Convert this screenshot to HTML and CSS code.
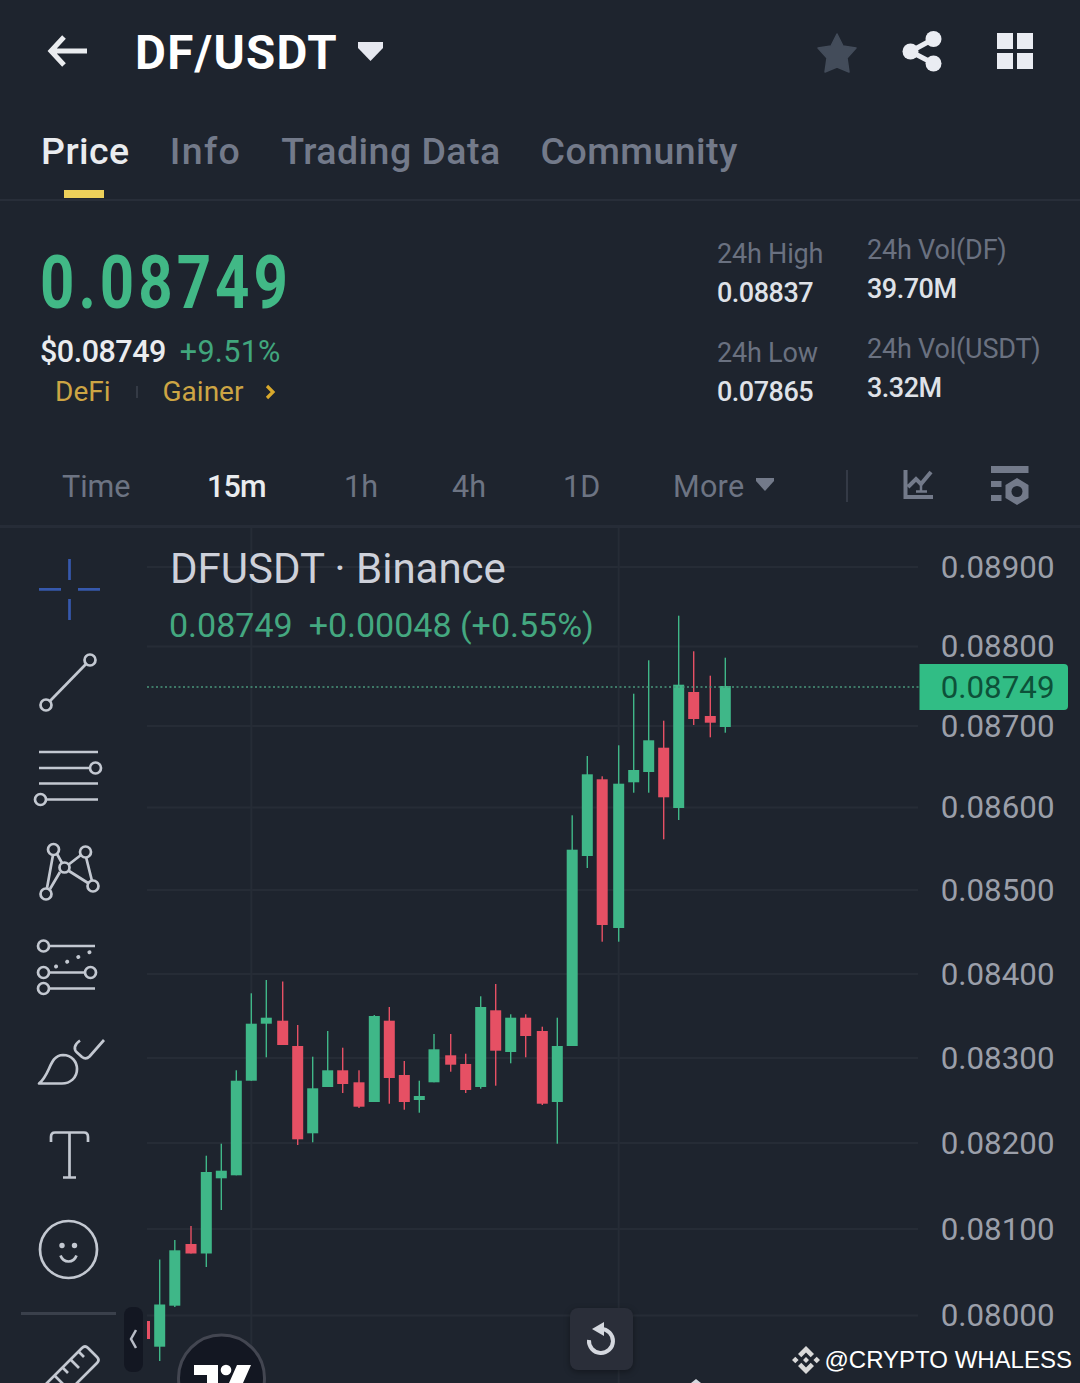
FILE: index.html
```
<!DOCTYPE html>
<html lang="en">
<head>
    <meta charset="UTF-8">
    <title>DF/USDT</title>
    <link rel="stylesheet" href="styles.css">
</head>
<body>
    <div class="header">
        <svg class="back" width="40" height="34" viewBox="0 0 40 34"><path d="M17 3L4 17l13 14M4 17h36" fill="none" stroke="#eaecef" stroke-width="5"/></svg>
        <h1 class="pair">DF/USDT</h1>
        <svg class="caret" width="25" height="19" viewBox="0 0 25 19"><path d="M0 0h25v6L12.500 19 0 6z" fill="#e6e8f0"/></svg>
        <div class="actions">
            <svg width="42" height="42" viewBox="0 0 42 42"><path d="M21 3l6 12 13 2-9 10 2 14-12-5-12 5 2-14-9-10 13-2z" fill="#434c5a" stroke="#434c5a" stroke-width="1.500" stroke-linejoin="round"/></svg>
            <svg width="42" height="42" viewBox="0 0 42 42"><path d="M32.500 9L9.500 21.500l23 12" fill="none" stroke="#eaecf2" stroke-width="5"/><g fill="#eaecf2"><circle cx="32.500" cy="9" r="8"/><circle cx="9.500" cy="21.500" r="8"/><circle cx="32.500" cy="33.500" r="8"/></g></svg>
            <svg width="42" height="42" viewBox="0 0 42 42"><path d="M3 3h16v16H3zM23 3h16v16H23zM3 23h16v16H3zM23 23h16v16H23z" fill="#eaecf2"/></svg>
        </div>
    </div>
    <div class="tabs">
        <a class="on">Price</a><a class="info">Info</a><a>Trading Data</a><a>Community</a>
    </div>
    <div class="ticker">
        <div class="last">
            <div class="price">0.08749</div>
            <div class="sub"><span class="usd">$0.08749</span><span class="up">+9.51%</span></div>
            <div class="tags">
                <span>DeFi</span><i></i><span>Gainer</span>
                <svg width="11" height="16" viewBox="0 0 11 16"><path d="M2 2l6 6-6 6" fill="none" stroke="#d9a92c" stroke-width="3.200"/></svg>
            </div>
        </div>
        <dl class="stats">
            <dt>24h High</dt><dd>0.08837</dd>
            <dt>24h Low</dt><dd>0.07865</dd>
        </dl>
        <dl class="stats vol">
            <dt>24h Vol(DF)</dt><dd>39.70M</dd>
            <dt>24h Vol(USDT)</dt><dd>3.32M</dd>
        </dl>
    </div>
    <div class="intervals">
        <span>Time</span><span class="on">15m</span><span>1h</span><span>4h</span><span>1D</span>
        <span class="more">More <svg width="18" height="13" viewBox="0 0 18 13"><path d="M0 0h18v3L9 13 0 3z" fill="#737a8a"/></svg></span>
        <i></i>
        <svg width="30" height="40" viewBox="0 0 30 40"><path d="M2.500 4v27H30M5 21l8-8 5 5L28 6" fill="none" stroke="#737a8a" stroke-width="4"/><path d="M18 17v9M13 25.500h11" stroke="#737a8a" stroke-width="2.500"/></svg>
        <svg width="38" height="40" viewBox="0 0 38 40"><path d="M0 0h37.500v7H0zM0 15h10.500v6H0zM0 29h10.500v6H0zM26 12l11.500 7v13L26 39l-11.500-7V19z" fill="#737a8a"/><circle cx="26" cy="25.500" r="5.500" fill="#1e242e"/></svg>
    </div>
    <div class="main">
        <div class="tools">
            <svg viewBox="0 0 147 94"><path class="cross" d="M69.500 17v21M69.500 57v21M39 47.300h22M78 47.300h22"/></svg>
            <svg viewBox="0 0 147 94"><path d="M50 65l36-37"/><circle cx="90" cy="24" r="5.500"/><circle cx="46" cy="69" r="5.500"/></svg>
            <svg viewBox="0 0 147 94"><path d="M39 22h59M39 38h51M39 53.500h59M47 69.500h51"/><circle cx="95.500" cy="38" r="5.500"/><circle cx="40.500" cy="69.500" r="5.500"/></svg>
            <svg viewBox="0 0 147 94"><path d="M53 31l-6 33M57 30l5 9M68 41l13-10M86 33l6 24M69 47l19 12M60 48L50 65"/><circle cx="53.500" cy="25.500" r="5.500"/><circle cx="85.500" cy="28" r="5.500"/><circle cx="64.500" cy="43.500" r="5"/><circle cx="93" cy="62" r="5.500"/><circle cx="46" cy="70" r="5.500"/></svg>
            <svg viewBox="0 0 147 94"><path d="M49 28h46M49 54.500h36M49 70.500h46"/><path class="dots" d="M56 48.500L90 34"/><circle cx="43.500" cy="28" r="5.500"/><circle cx="43.500" cy="54.500" r="5.500"/><circle cx="90.500" cy="54.500" r="5.500"/><circle cx="43.500" cy="70.500" r="5.500"/></svg>
            <svg viewBox="0 0 147 94"><path d="M39 71.500C51 62 49 43.500 63 43c9 0 14 7 14 14 0 9-7 14.500-15 14.500zM80 28.500c-6 4-6.500 9-3 12l5 4.500c2.500 2 5 2 7.500-.5L104 28"/></svg>
            <svg viewBox="0 0 147 94"><path d="M51 36v-5q0-4.500 4-4.500h29q4 0 4 4.500v5M69.500 27v44M63 71.500h13"/></svg>
            <svg viewBox="0 0 147 94"><circle cx="68.500" cy="49.500" r="28.500"/><path d="M60.500 55.500c3 8 13 8 16 0"/><g class="eyes"><circle cx="62" cy="45.500" r="2.700"/><circle cx="74.500" cy="45.500" r="2.700"/></g></svg>
            <div class="rule"></div>
            <svg viewBox="0 0 147 94"><path d="M34 84l48-48q3-3 6 0l9 9q3 3 0 6L49 99M79 40l5 5M71 48l8 8M63 56l5 5M55 64l8 8"/></svg>
        </div>
        <div class="chart">
            <svg id="chart" viewBox="147 528 933 855"></svg>
            <div class="legend">
                <div class="symbol">DFUSDT · Binance</div>
                <div class="change"><span>0.08749</span><span>+0.00048 (+0.55%)</span></div>
            </div>
        </div>
        <div class="fold"><svg width="8" height="20" viewBox="0 0 8 20"><path d="M7 1L2 10l5 9" fill="none" stroke="#b8bcc6" stroke-width="2.500"/></svg></div>
        <svg class="tv" width="90" height="50" viewBox="0 0 90 50"><circle cx="44.500" cy="45" r="43" fill="#131722" stroke="#434651" stroke-width="3"/><path d="M17 32h24v18H30v-8H17zM60 32h14l-8 18H52z" fill="#fff"/><circle cx="49" cy="37" r="5.300" fill="#fff"/></svg>
        <div class="reset"><svg width="34" height="38" viewBox="0 0 34 38"><path d="M5 19a12 12 0 1 0 12-11" fill="none" stroke="#d5d8df" stroke-width="4"/><path d="M8 8l12-7v14z" fill="#d5d8df"/></svg></div>
        <svg class="peak" width="12" height="4" viewBox="0 0 12 4"><path d="M1 4l5-4 5 4z" fill="#d5d8df"/></svg>
        <div class="mark">
            <svg width="28" height="28" viewBox="0 0 28 28"><path d="M14 0l8 8-3.300 3.300L14 6.600l-4.700 4.700L6 8zM14 28l8-8-3.300-3.300-4.700 4.700-4.700-4.700L6 20zM14 11l3 3-3 3-3-3zM3.300 10.700L6.600 14l-3.300 3.300L0 14zM24.700 10.700L28 14l-3.300 3.300-3.300-3.300z" fill="#d8d8d8"/></svg>
            <span>@CRYPTO WHALESS</span>
        </div>
    </div>
    <script>
        var chart = document.getElementById('chart');
        // price, y
        var ticks = [
            ['0.08900',567],['0.08800',646.5],['0.08700',726],['0.08600',807.5],['0.08500',890],
            ['0.08400',974],['0.08300',1058],['0.08200',1143],['0.08100',1229],['0.08000',1315.5]
        ];
        // x, high, body top, body bottom, low, up
        var candles = [
            [159.7,1259.5,1304.5,1346.7,1361,1],
            [174.8,1240,1250.3,1305.7,1307,1],
            [191,1226,1244,1253.5,1253.5,0],
            [206.3,1155.7,1172,1253.5,1267,1],
            [221.3,1143.7,1170.7,1178.3,1210,1],
            [236.3,1070.3,1080.7,1175.3,1175.3,1],
            [251.3,993.3,1023.7,1080.7,1080.7,1],
            [266.3,980,1017.7,1023.7,1057.3,1],
            [282.7,981.5,1020.7,1045,1045,0],
            [297.7,1025,1046,1139.3,1145,0],
            [312.7,1056.7,1088.3,1133.3,1142.3,1],
            [327.7,1031,1070.3,1087,1087,1],
            [342.7,1047.7,1070.3,1084,1093,0],
            [359,1070.3,1082.3,1106.7,1108,0],
            [374.3,1015,1016,1102,1102,1],
            [389.3,1007,1020.7,1078,1103.7,0],
            [404.3,1061,1075,1102,1109.7,0],
            [419.3,1080.7,1096,1100,1112.7,1],
            [434,1034,1049.3,1082.3,1082.3,1],
            [450.7,1034,1055.3,1064.7,1071.7,0],
            [465.7,1053.7,1064,1090,1093,0],
            [480.7,996.3,1007,1087,1088.7,1],
            [495.7,984,1010.3,1050.7,1085.7,0],
            [510.7,1014.3,1017.7,1052,1063.3,1],
            [525.7,1014.3,1017.7,1036,1057.3,0],
            [542.3,1026.7,1031,1103.7,1105,0],
            [557.3,1017.7,1046,1102,1143.7,1],
            [572.2,815.3,849.7,1046,1046,1],
            [587.3,756,774.3,856,868,1],
            [602.2,776.3,779.3,925,941.7,0],
            [618.7,745.3,783.7,928,941.7,1],
            [633.7,693.7,770,782.3,792.7,1],
            [648.7,660.3,740.3,772,792.7,1],
            [663.7,720.7,747.7,797.3,839.3,0],
            [678.7,615.7,684.7,808,820,1],
            [693.7,651.3,692,719,725,0],
            [710.3,675.7,716,722.7,737.3,0],
            [725.3,657.7,686,727,732.7,1]
        ];
        var html = '';
        for(var i = 0;i < ticks.length ; i++) {
            html += '<path class="grid" d="M147 '+ticks[i][1]+'H918"/>';
            html += '<text class="tick" x="940.7" y="'+(ticks[i][1]+10.5)+'">'+ticks[i][0]+'</text>';
        }
        html += '<path class="grid" d="M251.300 528V1383M618.700 528V1383"/>';
        html += '<rect class="down" x="147" y="1321" width="3" height="18"/>';
        for(var i = 0;i < candles.length ; i++) {
            var c = candles[i];
            html += '<g class="'+(c[5] ? 'up' : 'down')+'">';
            html += '<rect x="'+(c[0]-0.7)+'" y="'+c[1]+'" width="1.4" height="'+(c[4]-c[1])+'"/>';
            html += '<rect x="'+(c[0]-5.5)+'" y="'+c[2]+'" width="11" height="'+(c[3]-c[2])+'"/></g>';
        }
        html += '<path class="current" d="M147 687H919"/>';
        html += '<path class="tag" d="M919.500 664H1064q4 0 4 4v38q0 4-4 4H919.500z"/>';
        html += '<text class="tick now" x="940.7" y="698">0.08749</text>';
        chart.innerHTML = html;
    </script>
</body>
</html>
```
FILE: styles.css
```
* { margin: 0; padding: 0; box-sizing: border-box;}
body{ width: 1080px; height: 1383px; overflow: hidden; background: #1e242e; color: #eaecef; font-family: Roboto, "Liberation Sans", sans-serif;}
svg{ display: block; flex: none;}
.header{ height: 102px; padding: 0 44px 0 47px; display: flex; align-items: center;}
.pair{ margin-left: 48px; font-size: 47.5px; font-weight: 700; line-height: 56px; letter-spacing: 1.3px; padding-top: 4px; color: #fff;}
.caret{ margin-left: 20px;}
.actions{ margin-left: auto; display: flex; gap: 51px;}
.actions svg:first-child{ margin: 1px -8px 0 0;}
.tabs{ height: 99px; padding: 2px 40px 0 41px; display: flex; gap: 40px; border-bottom: 2px solid #282e39; font-size: 37.5px; font-weight: 500; line-height: 95px; letter-spacing: .45px; color: #737a8a;}
.tabs .info{ letter-spacing: 1.4px;}
.tabs .on{ position: relative; color: #eaecef;}
.tabs .on::after{ content: ""; position: absolute; left: 23px; bottom: 1px; width: 40px; height: 8px; background: #edd05a;}
.ticker{ height: 244px; padding-left: 40px; display: flex;}
.last{ width: 677px; padding-top: 39px;}
.price{ height: 84px; font-size: 75px; font-weight: 700; line-height: 84px; letter-spacing: 5px; transform: scaleX(.8); transform-origin: 0 0; color: #41b886;}
.sub{ height: 52px; margin-top: 2px; display: flex; gap: 14px; font-size: 30.5px; line-height: 52px;}
.usd{ font-weight: 500; letter-spacing: -.5px;}
.up{ letter-spacing: .3px; color: #41a67d;}
.tags{ height: 28px; padding-left: 15px; display: flex; align-items: center; font-size: 28px; line-height: 28px; color: #cda544;}
.tags i{ width: 2px; height: 12px; margin: 0 25px; background: #343a45;}
.tags svg{ margin-left: 22px;}
.stats{ width: 150px; padding-top: 34px; font-size: 27px; white-space: nowrap;}
.stats.vol{ width: 200px; padding-top: 30px;}
.stats dt{ height: 39px; line-height: 39px; letter-spacing: -.2px; color: #6a7180;}
.stats dd{ height: 39px; line-height: 39px; margin-bottom: 21px; font-weight: 500; letter-spacing: -.5px; color: #dfe2e8;}
.intervals{ height: 83px; padding: 2px 0 0 62px; border-bottom: 3px solid #262c37; display: grid; grid-template-columns: 145px 137px 108px 111px 110px 173px 57px 88px 40px; align-items: center; font-size: 30.5px; color: #6d7483;}
.intervals .on{ font-weight: 500; letter-spacing: -.8px; color: #eaecef;}
.intervals .more{ display: flex; align-items: center; gap: 12px; letter-spacing: .3px;}
.intervals .more svg{ margin-top: -4px;}
.intervals i{ width: 2px; height: 32px; background: #343a46;}
.main{ position: relative; height: 855px; display: flex;}
.tools{ width: 147px; height: 855px; padding-top: 14px; overflow: hidden;}
.tools svg{ width: 147px; height: 94px; fill: none; stroke: #c3c8d1; stroke-width: 2.7; stroke-linejoin: round;}
.tools .cross{ stroke: #3658ac;}
.tools .dots{ stroke-width: 4; stroke-linecap: round; stroke-dasharray: .1 12;}
.tools .eyes{ fill: #c3c8d1; stroke: none;}
.rule{ width: 95px; height: 3px; margin: 18px 0 -3px 21px; background: #3a404b;}
.chart{ position: relative; width: 933px;}
#chart{ width: 933px; height: 855px;}
.grid{ fill: none; stroke: #262c36; stroke-width: 2;}
.tick{ font-size: 31.3px; fill: #9b9fa9;}
.now{ fill: #0d5139;}
.chart .up{ fill: #3fb788;}
.chart .down{ fill: #e65064;}
.current{ stroke: #49957b; stroke-width: 1.6; stroke-dasharray: 2 2.5;}
.tag{ fill: #31bd85;}
.legend{ position: absolute; left: 22px; top: 15px;}
.symbol{ margin-left: 1px; font-size: 42px; line-height: 52px; color: #ced1da;}
.change{ display: flex; gap: 16px; margin-top: 5px; font-size: 34px; line-height: 50px; color: #44a880;}
.fold{ position: absolute; left: 124px; top: 779px; width: 19px; height: 65px; padding: 22px 0 0 5px; border-radius: 8px; background: #131722;}
.tv{ position: absolute; left: 177px; top: 805px;}
.reset{ position: absolute; left: 570px; top: 780px; width: 63px; height: 62px; padding: 13px 0 0 14px; border-radius: 8px; background: #2a2e39; box-shadow: 0 2px 6px rgba(0,0,0,.35);}
.peak{ position: absolute; left: 690px; bottom: 0;}
.mark{ position: absolute; right: 8px; bottom: 8px; display: flex; align-items: center; gap: 4px; font: 24px/30px "Liberation Sans", Arial, sans-serif; color: #fff;}
```
